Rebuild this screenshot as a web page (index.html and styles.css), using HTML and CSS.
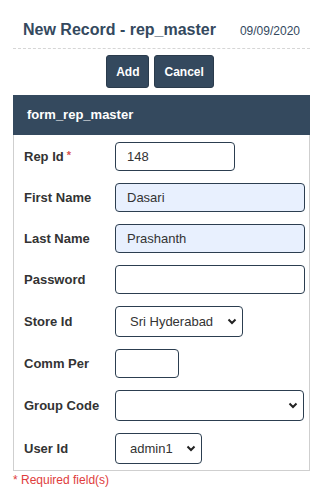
FILE: index.html
```html
<!DOCTYPE html>
<html>
<head>
<meta charset="utf-8">
<link rel="stylesheet" href="styles.css">
</head>
<body>
<div class="page">
  <div class="top">
    <h1 class="title">New Record - rep_master</h1>
    <span class="date">09/09/2020</span>
  </div>
  <div class="actions">
    <button class="btn">Add</button>
    <button class="btn">Cancel</button>
  </div>
  <div class="panel">
    <div class="panel-head">form_rep_master</div>
    <div class="panel-body">
      <div class="row">
        <label class="lbl">Rep Id<span class="req">*</span></label>
        <input class="inp w120" type="text" value="148">
      </div>
      <div class="row">
        <label class="lbl">First Name</label>
        <input class="inp wfull auto" type="text" value="Dasari">
      </div>
      <div class="row">
        <label class="lbl">Last Name</label>
        <input class="inp wfull auto" type="text" value="Prashanth">
      </div>
      <div class="row">
        <label class="lbl">Password</label>
        <input class="inp wfull" type="password" value="">
      </div>
      <div class="row">
        <label class="lbl">Store Id</label>
        <div class="sel-wrap w128">
          <select class="sel"><option>Sri Hyderabad</option></select>
          <svg class="chev" width="10" height="7" viewBox="0 0 10 7"><path d="M1.5 1.5 L5 5 L8.5 1.5" fill="none" stroke="#222" stroke-width="2"/></svg>
        </div>
      </div>
      <div class="row">
        <label class="lbl">Comm Per</label>
        <input class="inp w64" type="text" value="">
      </div>
      <div class="row">
        <label class="lbl">Group Code</label>
        <div class="sel-wrap wsel">
          <select class="sel"><option></option></select>
          <svg class="chev" width="10" height="7" viewBox="0 0 10 7"><path d="M1.5 1.5 L5 5 L8.5 1.5" fill="none" stroke="#222" stroke-width="2"/></svg>
        </div>
      </div>
      <div class="row">
        <label class="lbl">User Id</label>
        <div class="sel-wrap w87">
          <select class="sel"><option>admin1</option></select>
          <svg class="chev" width="10" height="7" viewBox="0 0 10 7"><path d="M1.5 1.5 L5 5 L8.5 1.5" fill="none" stroke="#222" stroke-width="2"/></svg>
        </div>
      </div>
    </div>
  </div>
  <div class="required">* Required field(s)</div>
</div>
</body>
</html>
```

FILE: styles.css
```css
html, body {
  margin: 0;
  padding: 0;
  background: #fff;
  font-family: "Liberation Sans", Arial, sans-serif;
}
.page {
  margin: 0 12px 0 13px;
}
.top {
  display: flex;
  justify-content: space-between;
  align-items: baseline;
  padding: 20px 10px 8px 10px;
  border-bottom: 1px dashed #d6d6d6;
}
.title {
  margin: 0;
  font-size: 16px;
  line-height: 20px;
  font-weight: bold;
  color: #34495e;
}
.date {
  font-size: 12px;
  color: #34495e;
}
.actions {
  display: flex;
  justify-content: center;
  gap: 5px;
  margin-top: 6px;
  padding-right: 3px;
}
.btn {
  height: 33px;
  padding: 0 9px;
  background: #34495e;
  color: #fff;
  border: 1px solid #2a3b4c;
  border-radius: 3px;
  font-family: "Liberation Sans", Arial, sans-serif;
  font-size: 12px;
  font-weight: bold;
}
.panel {
  margin-top: 7px;
}
.panel-head {
  height: 40px;
  line-height: 40px;
  padding-left: 14px;
  background: #34495e;
  color: #fff;
  font-size: 13px;
  font-weight: bold;
}
.panel-body {
  border: 1px solid #cfcfcf;
  border-top: none;
  padding: 7px 5px 6px 10px;
}
.row {
  display: flex;
  align-items: center;
  margin-bottom: 12px;
}
.row:last-child {
  margin-bottom: 0;
}
.lbl {
  width: 91px;
  flex: none;
  font-size: 13px;
  font-weight: bold;
  color: #333;
}
.req {
  color: #d9534f;
  font-size: 11px;
  margin-left: 3px;
  vertical-align: 2px;
}
.inp {
  box-sizing: border-box;
  height: 29px;
  padding: 0 11px;
  border: 1px solid #2c3e50;
  border-radius: 4px;
  background: #fff;
  font-family: "Liberation Sans", Arial, sans-serif;
  font-size: 13px;
  color: #333;
  outline: none;
}
.auto {
  background: #e8f0fe;
}
.w120 { width: 120px; }
.wfull { width: 190px; }
.w64 { width: 64px; }
.sel-wrap {
  position: relative;
  height: 31px;
}
.w128 { width: 128px; }
.wsel { width: 189px; }
.w87 { width: 87px; }
.sel {
  -webkit-appearance: none;
  appearance: none;
  box-sizing: border-box;
  width: 100%;
  height: 31px;
  padding: 0 20px 0 14px;
  border: 1px solid #2c3e50;
  border-radius: 4px;
  background: #fff;
  font-family: "Liberation Sans", Arial, sans-serif;
  font-size: 13px;
  color: #333;
  outline: none;
}
.chev {
  position: absolute;
  right: 6px;
  top: 12px;
  pointer-events: none;
}
.required {
  margin-top: 2px;
  font-size: 12px;
  line-height: 14px;
  color: #e03c3c;
}
```
